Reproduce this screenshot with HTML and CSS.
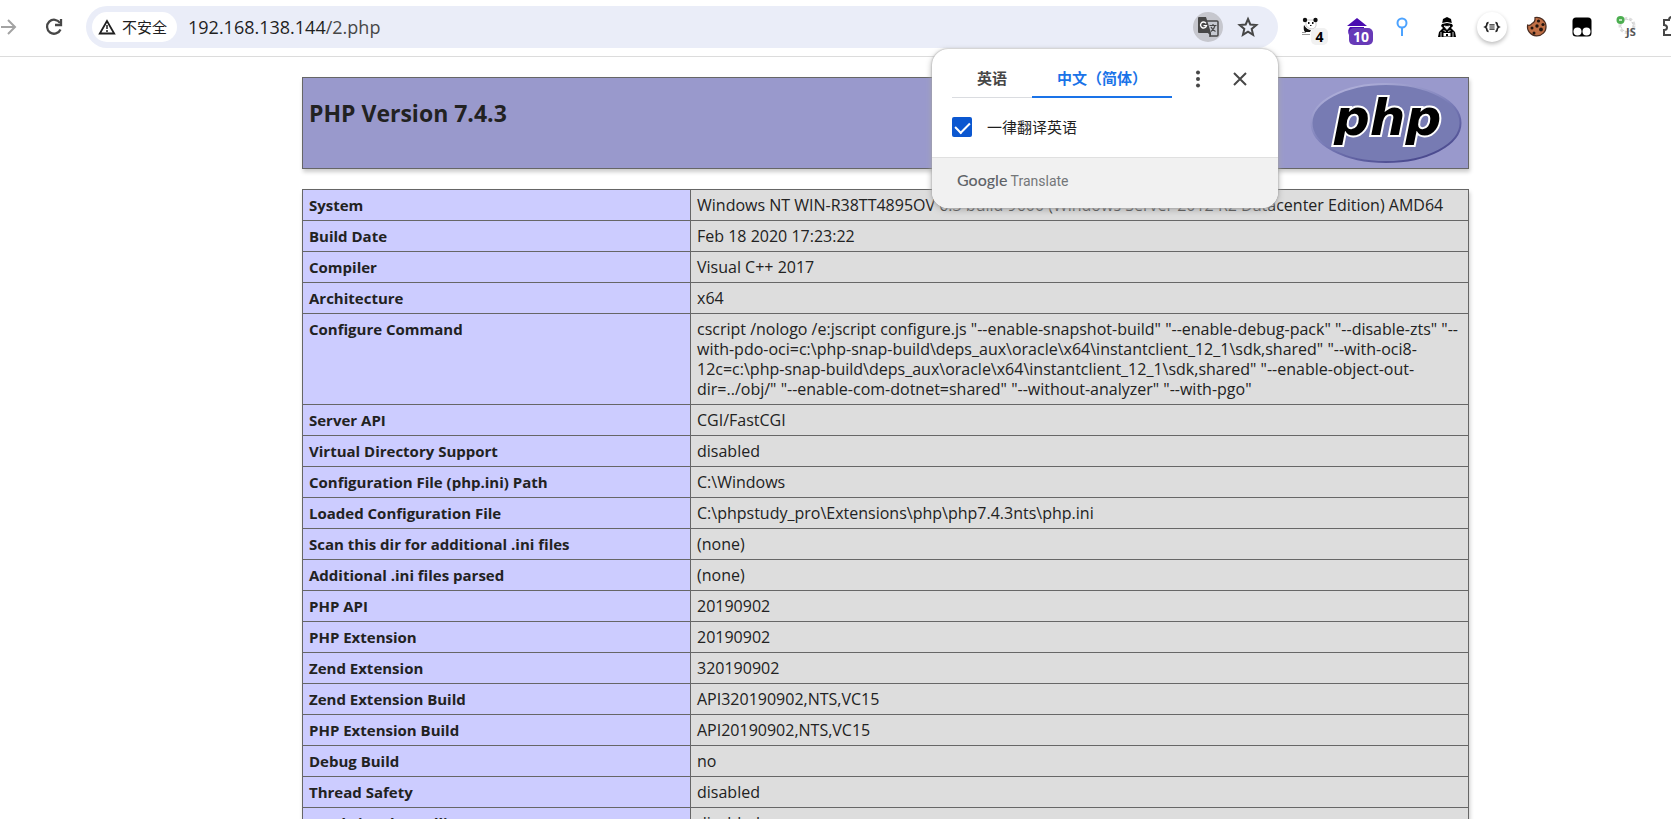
FILE: index.html
```
<!DOCTYPE html>
<html lang="zh-CN">
<head>
    <meta charset="UTF-8">
    <title>PHP 7.4.3 - phpinfo()</title>
    <link rel="stylesheet" href="styles.css">
</head>
<body>
<header class="toolbar">
    <button class="nav forward" type="button" aria-label="前进">
        <svg width="17" height="18" viewBox="0 0 17 18" fill="none" stroke="#a3a3a3" stroke-width="2"><path d="M1 9h13M8 2l7 7-7 7"/></svg>
    </button>
    <button class="nav" type="button" aria-label="重新加载">
        <svg width="18" height="18" viewBox="0 0 18 18" fill="none" stroke="#474747" stroke-width="2.300"><path d="M15 5A7 7 0 1 0 15.500 11.500"/><path d="M16 1v6h-6"/></svg>
    </button>
    <div class="omnibox">
        <button class="chip" type="button">
            <svg width="18" height="16" viewBox="0 0 18 16" fill="none" stroke="#1f1f1f" stroke-width="1.800"><path d="M9 2L1.800 14.500h14.400z"/><path d="M9 6v4M9 11v2" stroke-width="1.500"/></svg>
            <span>不安全</span>
        </button>
        <div class="url">192.168.138.144<span>/2.php</span></div>
        <button class="tool translate" type="button" aria-label="翻译此页">
            <svg width="22" height="22" viewBox="0 0 22 22"><path d="M9 5h11q1 0 1 1v13q0 1-1 1h-8" fill="#c6c9d1" stroke="#474747" stroke-width="1.500"/><path d="M2 1h7l5 16H2q-1 0-1-1V2q0-1 1-1z" fill="#474747"/><path d="M11 17l3 4v-4z" fill="#474747"/><path d="M9 7.300A3 3 0 1 0 9.500 9.600H6.500" fill="none" stroke="#fff" stroke-width="1.400"/><path d="M12.500 9.500h7M16 8v1.500M18 9.500q-1 4-4 6M14 11q1.500 3 4.500 4.500" fill="none" stroke="#474747" stroke-width="1.200"/></svg>
        </button>
        <button class="tool" type="button" aria-label="为此标签页添加书签">
            <svg width="22" height="22" viewBox="0 0 22 22" fill="none" stroke="#474747" stroke-width="2"><path d="M11 3l2.300 5.500 6 .5-4.600 3.900 1.400 5.900L11 15.700l-5.100 3.100 1.400-5.900L2.700 9l6-.5z"/></svg>
        </button>
        <section class="popup">
            <div class="popup-head">
                <div class="tabs">
                    <button type="button">英语</button>
                    <button class="current" type="button">中文（简体）</button>
                </div>
                <button class="icon-btn" type="button" aria-label="选项">
                    <svg width="20" height="20" viewBox="0 0 20 20" fill="#474747"><circle cx="10" cy="3.500" r="2"/><circle cx="10" cy="10" r="2"/><circle cx="10" cy="16.500" r="2"/></svg>
                </button>
                <button class="icon-btn" type="button" aria-label="关闭">
                    <svg width="20" height="20" viewBox="0 0 20 20" stroke="#474747" stroke-width="2"><path d="M4 4l12 12M16 4L4 16"/></svg>
                </button>
            </div>
            <label class="always"><input type="checkbox" checked><span>一律翻译英语</span></label>
            <div class="brand"><b>Google</b> Translate</div>
        </section>
    </div>
    <div class="extensions">
        <button type="button" aria-label="Panda">
            <svg width="22" height="20" viewBox="0 0 22 20"><path d="M5 3h10v6q-1 3-4 3t-6-3z" fill="#fff" stroke="#aaa" stroke-width=".6"/><g fill="#111"><circle cx="4" cy="3" r="2.200"/><circle cx="14.500" cy="3" r="2.200"/><path d="M3 8q3 5 7 5l-1 2H4q-2-2-1-7zM7 5h1.500v2H7zM11 5h1.500v2H11zM9 8h1.500v1H9z"/></g><path d="M1 17.500h8M1 15.500h4" stroke="#999"/></svg>
            <span class="badge grey">4</span>
        </button>
        <button type="button" aria-label="House">
            <svg width="22" height="20" viewBox="0 0 22 20" fill="#4a0bb0"><path d="M11 1l10 8H1z"/><path d="M4 10h14v8H3q-2-5 1-8z"/></svg>
            <span class="badge violet">10</span>
        </button>
        <button type="button" aria-label="Pin">
            <svg width="22" height="20" viewBox="0 0 22 20" fill="none" stroke="#4da3ff" stroke-width="2"><circle cx="11" cy="6" r="4.500"/><path d="M11 10.500V19"/></svg>
        </button>
        <button type="button" aria-label="Hacker">
            <svg width="20" height="22" viewBox="0 0 20 22"><path d="M10 1L14 3l1 5 1 2-2 2 4 4 1 5H1l1-5 4-4-2-2 1-2 1-5z" fill="#000"/><path d="M5 7.500q5-2 10 0" fill="none" stroke="#fff"/><path d="M7 10q3 1 6 0l-3 3.500zM6.500 14.500l2.500 1M13.500 14.500l-2.500 1" fill="#fff" stroke="#fff" stroke-width=".8"/><path d="M6.500 17h7v3.500h-7z" fill="#fff"/><path d="M9 18h2v2H9z"/><path d="M4 16v5M16 16v5" stroke="#fff" stroke-width=".8"/></svg>
        </button>
        <button type="button" aria-label="JSON">
            <span class="disc"><svg width="18" height="12" viewBox="0 0 18 14" fill="none" stroke="#222"><path d="M5 2Q3 2 3 4t-2 3q2 1 2 3t2 2M13 2q2 0 2 2t2 3q-2 1-2 3t-2 2" stroke-width="2"/><path d="M6 4.500h6M6 7h6M6 9.500h6" stroke-width="1.300"/></svg></span>
        </button>
        <button type="button" aria-label="Cookie">
            <svg width="22" height="22" viewBox="0 0 22 22"><path d="M9 1.500A9.300 9.300 0 1 1 1.600 9q3 1 4.400-1.500Q9.500 6 9 1.500z" fill="#c06f45" stroke="#4a2c20" stroke-width="1.200"/><g fill="#22150f"><circle cx="12.500" cy="5" r="1.600"/><circle cx="17" cy="8.500" r="1.600"/><circle cx="11" cy="10" r="1.700"/><circle cx="6" cy="12" r="1.500"/><circle cx="15" cy="13.500" r="1.900"/><circle cx="8" cy="17" r="1.500"/></g></svg>
        </button>
        <button type="button" aria-label="Tampermonkey">
            <svg width="20" height="20" viewBox="0 0 20 20"><rect x=".5" y=".5" width="19" height="19" rx="3.500"/><circle cx="5.500" cy="14.500" r="4" fill="#fff"/><circle cx="14.500" cy="14.500" r="4" fill="#fff"/></svg>
        </button>
        <button type="button" aria-label="JS">
            <svg width="22" height="22" viewBox="0 0 22 22"><circle cx="11" cy="9.500" r="7" fill="none" stroke="#ddd" stroke-width="3" stroke-dasharray="3 2"/><circle cx="11" cy="9.500" r="6" fill="#fff" stroke="#ccc" stroke-dasharray="2 1"/><circle cx="4.500" cy="4" r="4" fill="#4cae50"/><path d="M3 3h3v2H3z" fill="#bce6bd"/><text x="10" y="20" class="js-mark">JS</text></svg>
        </button>
        <button type="button" aria-label="扩展程序">
            <svg width="20" height="22" viewBox="0 0 20 22" fill="none" stroke="#474747" stroke-width="2"><path d="M2 4h5q0-3 3-3t3 3h4v5q3 0 3 3t-3 3v4H2v-5q3 0 3-2.500T2 9z"/></svg>
        </button>
    </div>
</header>
<main class="center">
    <div class="banner">
        <h1>PHP Version 7.4.3</h1>
        <svg width="152" height="80" viewBox="0 0 152 80" role="img" aria-label="PHP logo">
            <defs>
                <linearGradient id="rim" x1="0.2" y1="0" x2="0.8" y2="1">
                    <stop offset="0" stop-color="#b4b4dc"/>
                    <stop offset="0.5" stop-color="#7a7db8"/>
                    <stop offset="1" stop-color="#444389"/>
                </linearGradient>
            </defs>
            <ellipse cx="76" cy="40" rx="74.500" ry="39" fill="#777bb3" stroke="url(#rim)" stroke-width="2"/>
            <text x="24" y="52" class="logo-text">php</text>
        </svg>
    </div>
    <table class="info">
        <tr><th scope="row">System</th><td>Windows NT WIN-R38TT4895OV 6.3 build 9600 (Windows Server 2012 R2 Datacenter Edition) AMD64</td></tr>
        <tr><th scope="row">Build Date</th><td>Feb 18 2020 17:23:22</td></tr>
        <tr><th scope="row">Compiler</th><td>Visual C++ 2017</td></tr>
        <tr><th scope="row">Architecture</th><td>x64</td></tr>
        <tr><th scope="row">Configure Command</th><td>cscript /nologo /e:jscript configure.js "--enable-snapshot-build" "--enable-debug-pack" "--disable-zts" "--<wbr>with-pdo-oci=c:\php-snap-build\deps_aux\oracle\x64\instantclient_12_1\sdk,shared" "--with-oci8-<wbr>12c=c:\php-snap-build\deps_aux\oracle\x64\instantclient_12_1\sdk,shared" "--enable-object-out-dir=../obj/" "--enable-com-dotnet=shared" "--without-analyzer" "--with-pgo"</td></tr>
        <tr><th scope="row">Server API</th><td>CGI/FastCGI</td></tr>
        <tr><th scope="row">Virtual Directory Support</th><td>disabled</td></tr>
        <tr><th scope="row">Configuration File (php.ini) Path</th><td>C:\Windows</td></tr>
        <tr><th scope="row">Loaded Configuration File</th><td>C:\phpstudy_pro\Extensions\php\php7.4.3nts\php.ini</td></tr>
        <tr><th scope="row">Scan this dir for additional .ini files</th><td>(none)</td></tr>
        <tr><th scope="row">Additional .ini files parsed</th><td>(none)</td></tr>
        <tr><th scope="row">PHP API</th><td>20190902</td></tr>
        <tr><th scope="row">PHP Extension</th><td>20190902</td></tr>
        <tr><th scope="row">Zend Extension</th><td>320190902</td></tr>
        <tr><th scope="row">Zend Extension Build</th><td>API320190902,NTS,VC15</td></tr>
        <tr><th scope="row">PHP Extension Build</th><td>API20190902,NTS,VC15</td></tr>
        <tr><th scope="row">Debug Build</th><td>no</td></tr>
        <tr><th scope="row">Thread Safety</th><td>disabled</td></tr>
        <tr><th scope="row">Zend Signal Handling</th><td>disabled</td></tr>
    </table>
</main>
</body>
</html>
```
FILE: styles.css
```
* {
    box-sizing: border-box;
    margin: 0;
    padding: 0
}

body {
    height: 100vh;
    overflow: hidden;
    background-color: #fff;
    color: #222;
    font-family: "Open Sans", "Noto Sans CJK SC", sans-serif;
    font-size: 15px;
    line-height: 20px;
}

button {
    border: 0;
    background: none;
    color: inherit;
    font: inherit;
    cursor: pointer;
}

svg {
    display: block;
    flex: none;
}

/* toolbar */
.toolbar {
    display: flex;
    align-items: center;
    height: 57px;
    padding-bottom: 2px;
    border-bottom: 1px solid #dcdcdc;
}

.nav {
    display: flex;
    justify-content: center;
    width: 45px;
}

.forward {
    justify-content: flex-start;
    width: 31px;
}

.omnibox {
    position: relative;
    z-index: 1;
    display: flex;
    flex: 1;
    align-items: center;
    height: 42px;
    margin: 0 11px 0 10px;
    padding: 0 15px 0 6px;
    border-radius: 21px;
    background-color: #eaedf8;
}

.chip {
    display: flex;
    align-items: center;
    gap: 6px;
    height: 30px;
    padding: 0 10px 0 6px;
    border-radius: 15px;
    background-color: #fff;
    color: #1f1f1f;
}

.url {
    flex: 1;
    margin-left: 11px;
    color: #1f1f1f;
    font-size: 18px;
}

.url span {
    color: #474747;
}

.tool {
    display: flex;
    align-items: center;
    justify-content: center;
    width: 30px;
    height: 30px;
    margin-left: 10px;
    border-radius: 50%;
}

.translate {
    background-color: #c6c7ce;
}

.extensions {
    display: flex;
    width: 382px;
    overflow: hidden;
}

.extensions button {
    position: relative;
    display: flex;
    flex: none;
    align-items: center;
    justify-content: center;
    width: 45px;
    height: 42px;
}

.badge {
    position: absolute;
    right: 6px;
    bottom: 3px;
    min-width: 17px;
    padding: 0 4px;
    border-radius: 5px;
    font-size: 14px;
    font-weight: bold;
    line-height: 17px;
}

.grey {
    background-color: #f1f1f1;
    color: #000;
}

.violet {
    background-color: #673ab7;
    color: #fff;
}

.disc {
    display: flex;
    align-items: center;
    justify-content: center;
    width: 30px;
    height: 30px;
    border-radius: 50%;
    box-shadow: 0 2px 4px #bbb;
}

.js-mark {
    fill: #555;
    font: bold 11px "Open Sans", sans-serif;
}

/* translate popup */
.popup {
    position: absolute;
    top: 43px;
    right: 0;
    width: 346px;
    overflow: hidden;
    border-radius: 16px;
    background-color: #fff;
    box-shadow: 0 0 2px #999, 0 2px 6px #aaa;
}

.popup-head {
    display: flex;
    align-items: center;
    padding: 10px 15px 0 20px;
}

.tabs {
    display: flex;
    margin-right: 5px;
}

.tabs button {
    height: 39px;
    padding: 0 25px;
    border-bottom: 1px solid #dadce0;
    color: #474747;
    font-weight: bold;
}

.tabs .current {
    border-bottom: 2px solid #1a73e8;
    color: #1a73e8;
}

.icon-btn {
    display: flex;
    justify-content: center;
    width: 42px;
}

.always {
    display: flex;
    align-items: center;
    gap: 15px;
    padding: 19px 20px 20px;
    color: #1f1f1f;
}

.always input {
    display: flex;
    justify-content: center;
    width: 20px;
    height: 20px;
    border-radius: 2px;
    background-color: #0b57d0;
    appearance: none;
}

.always input:checked::before {
    content: "";
    width: 7px;
    height: 12px;
    margin-top: 2px;
    border: solid #fff;
    border-width: 0 2px 2px 0;
    transform: rotate(45deg);
}

.brand {
    padding: 12px 25px 17px;
    border-top: 1px solid #e0e0e0;
    background-color: #f1f1f1;
    color: #747779;
    font-family: Roboto, sans-serif;
    font-size: 14px;
}

.brand b {
    color: #5f6368;
    font-family: Lato, sans-serif;
    font-size: 16px;
    font-weight: 500;
}

/* phpinfo */
.center {
    max-width: 1267px;
    margin: 20px auto;
    padding-left: 100px;
}

.banner {
    display: flex;
    align-items: flex-start;
    justify-content: space-between;
    margin-bottom: 20px;
    padding: 5px 6px;
    border: 1px solid #666;
    background-color: #99c;
    box-shadow: 1px 3px 4px #ccc;
}

h1 {
    margin-top: 14px;
    font-size: 23px;
    line-height: 32px;
}

.logo-text {
    fill: #000;
    stroke: #fff;
    stroke-width: 4px;
    paint-order: stroke;
    font: italic bold 50px "DejaVu Sans", sans-serif;
}

.info {
    width: 100%;
    border-collapse: collapse;
    box-shadow: 1px 3px 4px #ccc;
}

.info th,
.info td {
    padding: 5px 6px;
    border: 1px solid #666;
    text-align: left;
    vertical-align: baseline;
}

.info th {
    width: 388px;
    background-color: #ccf;
}

.info td {
    background-color: #ddd;
    font-size: 16px;
}
```
